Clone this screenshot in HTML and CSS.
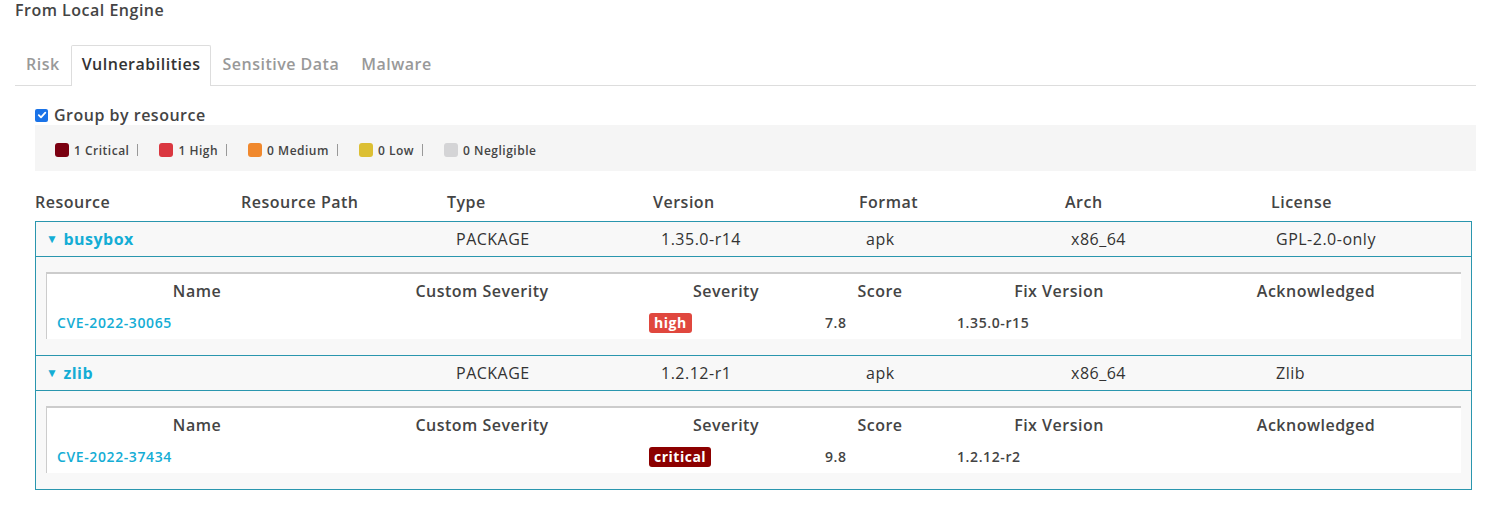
FILE: index.html
```html
<!DOCTYPE html>
<html>
<head>
<meta charset="utf-8">
<link rel="stylesheet" href="styles.css">
</head>
<body>
<div class="page">
  <h2 class="title">From Local Engine</h2>
  <div class="tabs">
    <div class="tab">Risk</div>
    <div class="tab active">Vulnerabilities</div>
    <div class="tab">Sensitive Data</div>
    <div class="tab">Malware</div>
  </div>
  <div class="content">
    <label class="group-by"><span class="check"><svg width="10" height="10" viewBox="0 0 10 10"><path d="M1.8 5.2 L4 7.3 L8.3 2.6" fill="none" stroke="#fff" stroke-width="1.8" stroke-linecap="round" stroke-linejoin="round"/></svg></span>Group by resource</label>
    <div class="legend">
      <span class="li"><span class="sw critical"></span>1 Critical</span><span class="sep"></span>
      <span class="li"><span class="sw high"></span>1 High</span><span class="sep"></span>
      <span class="li"><span class="sw medium"></span>0 Medium</span><span class="sep"></span>
      <span class="li"><span class="sw low"></span>0 Low</span><span class="sep"></span>
      <span class="li"><span class="sw negl"></span>0 Negligible</span>
    </div>
    <div class="thead">
      <div>Resource</div><div>Resource Path</div><div>Type</div><div>Version</div><div>Format</div><div>Arch</div><div>License</div>
    </div>
    <div class="groups">
      <div class="grow">
        <div class="rname"><span class="caret">▼</span>busybox</div><div></div><div>PACKAGE</div><div>1.35.0-r14</div><div>apk</div><div>x86_64</div><div>GPL-2.0-only</div>
      </div>
      <div class="expand">
        <div class="inner">
          <div class="ihead"><div>Name</div><div>Custom Severity</div><div>Severity</div><div>Score</div><div>Fix Version</div><div>Acknowledged</div></div>
          <div class="irow"><div class="cve">CVE-2022-30065</div><div><span class="badge b-high">high</span></div><div>7.8</div><div>1.35.0-r15</div></div>
        </div>
      </div>
      <div class="grow">
        <div class="rname"><span class="caret">▼</span>zlib</div><div></div><div>PACKAGE</div><div>1.2.12-r1</div><div>apk</div><div>x86_64</div><div>Zlib</div>
      </div>
      <div class="expand last">
        <div class="inner">
          <div class="ihead"><div>Name</div><div>Custom Severity</div><div>Severity</div><div>Score</div><div>Fix Version</div><div>Acknowledged</div></div>
          <div class="irow"><div class="cve">CVE-2022-37434</div><div><span class="badge b-crit">critical</span></div><div>9.8</div><div>1.2.12-r2</div></div>
        </div>
      </div>
    </div>
  </div>
</div>
</body>
</html>
```
FILE: styles.css
```css
html, body { margin: 0; padding: 0; background: #fff; }
body { font-family: "Open Sans", Lato, sans-serif; color: #444; letter-spacing: 0.5px; }
.page { padding: 0 10px 0 15px; }
.title { margin: 0; padding-top: 0; font-size: 16px; font-weight: 600; color: #444; line-height: 20px; }
.tabs { display: flex; margin-top: 25px; border-bottom: 1px solid #ddd; height: 40px; padding-left: 0; }
.tab { font-size: 16px; font-weight: 600; color: #999; padding: 0 10px; line-height: 36px; border: 1px solid transparent; border-bottom: none; }
.tab.active { color: #333; background: #fff; border-color: #ddd; border-radius: 2px 2px 0 0; height: 40px; margin-bottom: -1px; }
.content { padding: 0 0 0 20px; }
.group-by { display: flex; align-items: center; margin-top: 19px; font-size: 16px; font-weight: 600; color: #444; line-height: 20px; height: 20px; }
.check { width: 13px; height: 13px; background: #1a73e8; border-radius: 2px; display: inline-flex; align-items: center; justify-content: center; margin-right: 6px; }
.legend { background: #f5f5f5; height: 42px; padding-top: 4px; display: flex; align-items: center; padding-left: 20px; font-size: 12px; font-weight: 600; color: #444; }
.li { display: inline-flex; align-items: center; }
.sw { width: 14px; height: 14px; border-radius: 3px; margin-right: 5px; }
.sw.critical { background: #7b0011; }
.sw.high { background: #da3740; }
.sw.medium { background: #f0882d; }
.sw.low { background: #dcbf33; }
.sw.negl { background: #d4d4d6; }
.sep { width: 1px; height: 12px; background: #999; margin: 0 21px 0 8px; }
.thead { display: grid; grid-template-columns: repeat(7, 206px); margin-top: 20px; font-size: 16px; font-weight: 600; color: #444; height: 30px; }
.groups { border: 1px solid #2a96ae; width: 1435px; }
.grow { display: grid; grid-template-columns: 205px 205px 205px 205px 205px 205px 1fr; padding-left: 10px; height: 34px; align-items: center; background: #f8f8f8; font-size: 16px; color: #333; border-bottom: 1px solid #2a96ae; }
.expand + .grow { border-top: 1px solid #2a96ae; }
.rname { color: #14add5; font-weight: 700; }
.caret { font-size: 12px; margin-right: 5px; position: relative; top: -2px; }
.expand { background: #f8f8f8; padding: 15px 10px 16px 10px; }
.inner { background: #fff; border-top: 2px solid #ccc; border-left: 1px solid #ccc; height: 65px; }
.ihead { display: grid; grid-template-columns: 300px 270px 218px 90px 268px 246px; height: 33px; align-items: center; font-size: 16px; font-weight: 600; color: #444; text-align: center; }
.irow { display: grid; grid-template-columns: 592px 176px 132px 1fr; padding-left: 10px; height: 31px; align-items: center; font-size: 14px; font-weight: 600; color: #444; letter-spacing: 0.6px; }
.cve { color: #14add5; }
.badge { display: inline-block; color: #fff; font-size: 14px; font-weight: 700; padding: 0 5px; line-height: 20px; border-radius: 3px; letter-spacing: 0.5px; }
.b-high { background: #e0473e; }
.b-crit { background: #8c0000; }
```
